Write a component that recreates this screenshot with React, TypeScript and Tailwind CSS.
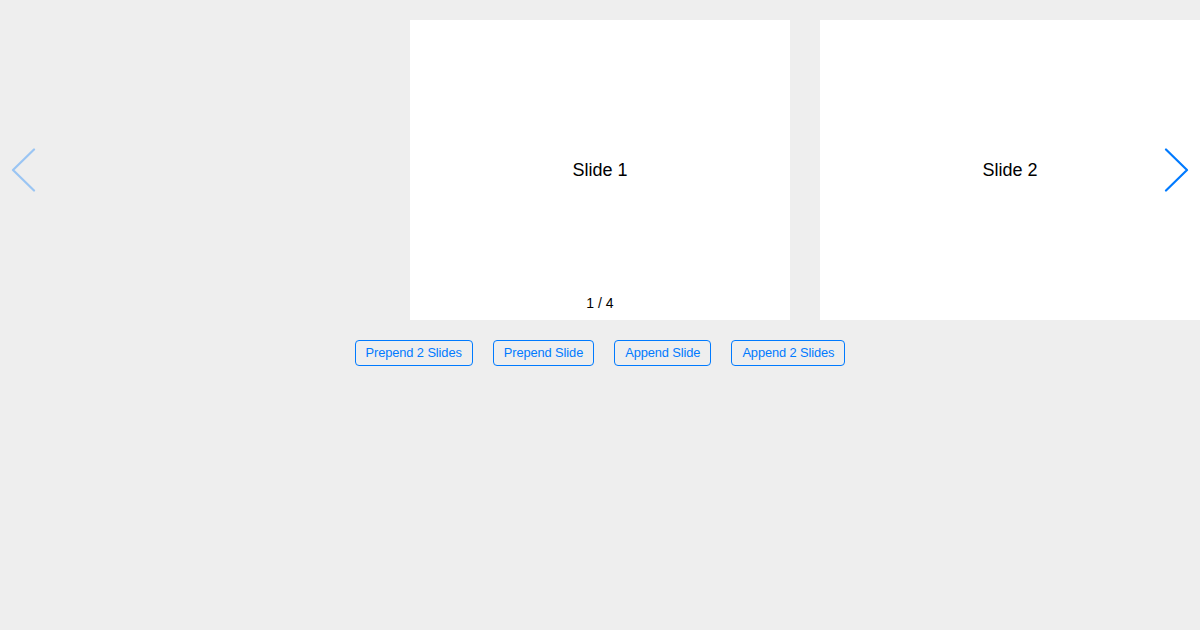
const slides = ['Slide 1', 'Slide 2', 'Slide 3', 'Slide 4'];
const buttons = ['Prepend 2 Slides', 'Prepend Slide', 'Append Slide', 'Append 2 Slides'];

function Arrow({ dir }: { dir: 'left' | 'right' }) {
  return (
    <svg width="27" height="44" viewBox="0 0 27 44" fill="none">
      {dir === 'left' ? (
        <path d="M24 1.5 L3 22 L24 42.5" stroke="#007aff" strokeWidth="2.2" strokeLinecap="round" strokeLinejoin="round" />
      ) : (
        <path d="M3 1.5 L24 22 L3 42.5" stroke="#007aff" strokeWidth="2.2" strokeLinecap="round" strokeLinejoin="round" />
      )}
    </svg>
  );
}

export default function App() {
  return (
    <div className="min-h-[630px] w-[1200px] bg-[#eeeeee] font-['Liberation_Sans',Arial,sans-serif] text-[14px] text-black pt-[20px]">
      {/* swiper: centered slides, 3 per view, 30px between */}
      <div className="relative h-[300px] w-full overflow-hidden">
        <div className="flex h-full gap-[30px] translate-x-[410px]">
          {slides.map((s) => (
            <div key={s} className="flex h-full w-[380px] shrink-0 items-center justify-center bg-white text-[18px]">
              {s}
            </div>
          ))}
        </div>
        <button className="absolute left-[10px] top-1/2 -mt-[22px] opacity-35 cursor-default">
          <Arrow dir="left" />
        </button>
        <button className="absolute right-[10px] top-1/2 -mt-[22px] cursor-pointer">
          <Arrow dir="right" />
        </button>
        <div className="absolute bottom-[9px] left-0 w-full text-center leading-[16px]">
          <span>1</span> / <span>4</span>
        </div>
      </div>
      <div className="mt-[20px] flex justify-center gap-[20px]">
        {buttons.map((b) => (
          <button
            key={b}
            className="rounded-[4px] border border-[#007aff] px-[10px] py-[4px] text-[12.85px] leading-[16px] tracking-[-0.1px] text-[#007aff] cursor-pointer"
          >
            {b}
          </button>
        ))}
      </div>
    </div>
  );
}
